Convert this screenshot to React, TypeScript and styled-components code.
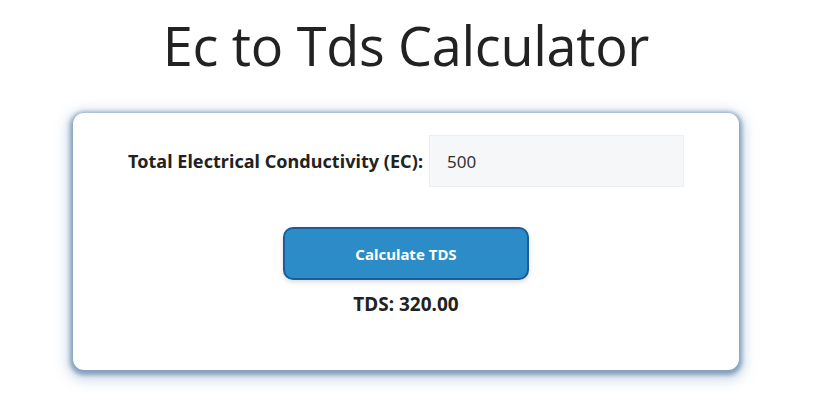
import { useState } from "react";
import styled, { createGlobalStyle } from "styled-components";

const GlobalStyle = createGlobalStyle`
  body {
    margin: 0;
    background: #ffffff;
    font-family: "Noto Sans", "Open Sans", sans-serif;
    color: #222;
  }
`;

const Page = styled.div`
  width: 812px;
  padding-bottom: 40px;
  display: flex;
  flex-direction: column;
  align-items: center;
`;

const Title = styled.h1`
  margin: 10px 0 0;
  font-family: "Open Sans", "Noto Sans", sans-serif;
  font-weight: 400;
  font-size: 54px;
  line-height: 70px;
  color: #222;
  letter-spacing: -0.3px;
`;

const Card = styled.div`
  margin-top: 33px;
  width: 666px;
  height: 257px;
  box-sizing: border-box;
  background: #fff;
  border-radius: 11px;
  box-shadow: 0 2px 4px 3px rgba(100, 135, 170, 0.7),
    0 4px 14px 5px rgba(120, 155, 195, 0.4);
  display: flex;
  flex-direction: column;
  align-items: center;
  padding-top: 22px;
`;

const Row = styled.div`
  display: flex;
  align-items: center;
  gap: 6px;
`;

const Label = styled.label`
  font-weight: 700;
  font-size: 18px;
  color: #222;
  letter-spacing: 0.05px;
`;

const Input = styled.input`
  width: 255px;
  height: 52px;
  box-sizing: border-box;
  border: 1px solid #eceef1;
  background: #f6f7f9;
  padding: 0 17px;
  font-family: "Noto Sans", "Open Sans", sans-serif;
  font-size: 17px;
  color: #333;
  outline: none;
`;

const Button = styled.button`
  margin-top: 40px;
  width: 246px;
  height: 53px;
  border: 2px solid #1a5c9c;
  border-radius: 10px;
  background: #2b8cc8;
  color: #fff;
  font-family: "Noto Sans", "Open Sans", sans-serif;
  font-weight: 700;
  font-size: 15px;
  box-shadow: 0 2px 5px rgba(0, 0, 0, 0.15);
  cursor: pointer;
`;

const Result = styled.div`
  margin-top: 11px;
  font-weight: 700;
  font-size: 19px;
  color: #222;
`;

export default function App() {
  const [ec, setEc] = useState("500");
  const [tds, setTds] = useState((500 * 0.64).toFixed(2));

  return (
    <>
      <GlobalStyle />
      <Page>
        <Title>Ec to Tds Calculator</Title>
        <Card>
          <Row>
            <Label>Total Electrical Conductivity (EC):</Label>
            <Input value={ec} onChange={(e) => setEc(e.target.value)} />
          </Row>
          <Button onClick={() => setTds((parseFloat(ec) * 0.64).toFixed(2))}>
            Calculate TDS
          </Button>
          <Result>TDS: {tds}</Result>
        </Card>
      </Page>
    </>
  );
}
